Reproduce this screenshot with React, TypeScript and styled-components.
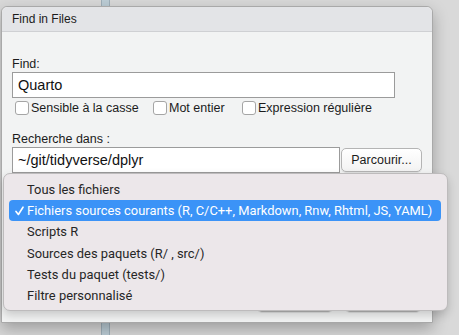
import React from "react";
import styled, { createGlobalStyle } from "styled-components";

const Global = createGlobalStyle`
  html, body { margin: 0; padding: 0; }
  body { background: #d8d8d8; width: 459px; height: 335px; overflow: hidden; }
  * { box-sizing: border-box; }
`;

const Desktop = styled.div`
  position: relative;
  width: 459px;
  height: 335px;
  display: grid;
  grid-template-columns: 101px 9px 1fr;
  background: #d9d9d9;
`;

const Pane = styled.div<{ $tone: string }>`
  background: ${(p) => p.$tone};
`;

const Splitter = styled.div`
  background: #bccdd6;
  border-left: 1px solid #9fb0ba;
  border-right: 1px solid #9fb0ba;
`;

const Dialog = styled.div`
  position: absolute;
  left: 1px;
  top: 6px;
  width: 432px;
  height: 317px;
  display: flex;
  flex-direction: column;
  background: #f2f3f3;
  border: 1px solid #a9a9a9;
  border-radius: 6px 6px 0 0;
  box-shadow: 0 6px 16px rgba(0, 0, 0, 0.28);
  font-family: "Liberation Sans", Arial, sans-serif;
  color: #1b1b1b;
`;

const TitleBar = styled.div`
  height: 25px;
  flex: none;
  display: flex;
  align-items: center;
  padding-left: 10px;
  background: #e3e4e7;
  border-bottom: 1px solid #cfd0d3;
  border-radius: 6px 6px 0 0;
  font-size: 12px;
`;

const Body = styled.div`
  flex: 1;
  display: flex;
  flex-direction: column;
  padding: 24px 0 0 10px;
`;

const Label = styled.div`
  font-size: 12.5px;
  line-height: 16px;
  height: 16px;
`;

const FieldRow = styled.div`
  display: flex;
  align-items: center;
  gap: 1px;
`;

const TextInput = styled.div<{ $w: number }>`
  width: ${(p) => p.$w}px;
  height: 26px;
  background: #ffffff;
  border: 1px solid #9b9b9b;
  display: flex;
  align-items: center;
  padding-left: 5px;
  font-size: 14.5px;
  color: #111;
`;

const Checks = styled.div`
  display: flex;
  align-items: center;
  height: 20px;
  padding-left: 3px;
`;

const Check = styled.label<{ $w: number }>`
  display: flex;
  align-items: center;
  gap: 2px;
  width: ${(p) => p.$w}px;
  font-size: 12.5px;
`;

const Box = styled.span`
  width: 14px;
  height: 14px;
  border: 1px solid #a5a5a5;
  border-radius: 3px;
  background: #fff;
`;

const Spacer = styled.div<{ $h: number }>`
  height: ${(p) => p.$h}px;
`;

const Button = styled.div<{ $w: number }>`
  width: ${(p) => p.$w}px;
  height: 24px;
  border: 1px solid #b4b4b4;
  border-radius: 5px;
  background: linear-gradient(#ffffff, #f3f3f3);
  box-shadow: 0 1px 0 rgba(0, 0, 0, 0.08);
  display: flex;
  align-items: center;
  justify-content: center;
  font-size: 12.5px;
`;

const Footer = styled.div`
  display: flex;
  justify-content: flex-end;
  gap: 12px;
  padding: 0 11px 10px 0;
  margin-top: auto;
`;

const Menu = styled.div`
  position: absolute;
  left: 3px;
  top: 173px;
  width: 445px;
  height: 138px;
  background: #ece7ea;
  border: 1px solid #bdbbbc;
  border-radius: 7px;
  box-shadow: 0 4px 10px rgba(0, 0, 0, 0.18);
  padding: 5px 6px 0 5px;
  display: flex;
  flex-direction: column;
  font-family: Roboto, "Liberation Sans", Arial, sans-serif;
`;

const Item = styled.div<{ $active?: boolean }>`
  height: 21.2px;
  display: flex;
  align-items: center;
  padding-left: 18px;
  font-size: 12.9px;
  white-space: nowrap;
  border-radius: 4px;
  color: ${(p) => (p.$active ? "#ffffff" : "#262626")};
  background: ${(p) => (p.$active ? "#3b93f7" : "transparent")};
  position: relative;
`;

const Tick = styled.svg`
  position: absolute;
  left: 6px;
  top: 6px;
`;

const items = [
  "Tous les fichiers",
  "Fichiers sources courants (R, C/C++, Markdown, Rnw, Rhtml, JS, YAML)",
  "Scripts R",
  "Sources des paquets (R/ , src/)",
  "Tests du paquet (tests/)",
  "Filtre personnalisé",
];

export default function App() {
  return (
    <>
      <Global />
      <Desktop>
        <Pane $tone="#d9d9d9" />
        <Splitter />
        <Pane $tone="#d9d9d9" />
        <Dialog>
          <TitleBar>Find in Files</TitleBar>
          <Body>
            <Label>Find:</Label>
            <FieldRow>
              <TextInput $w={383}>Quarto</TextInput>
            </FieldRow>
            <Checks>
              <Check $w={138}>
                <Box />
                Sensible à la casse
              </Check>
              <Check $w={89}>
                <Box />
                Mot entier
              </Check>
              <Check $w={150}>
                <Box />
                Expression régulière
              </Check>
            </Checks>
            <Spacer $h={13} />
            <Label>Recherche dans :</Label>
            <FieldRow>
              <TextInput $w={328}>~/git/tidyverse/dplyr</TextInput>
              <Button $w={81}>Parcourir...</Button>
            </FieldRow>
          </Body>
          <Footer>
            <Button $w={76}>Annuler</Button>
            <Button $w={76}>OK</Button>
          </Footer>
        </Dialog>
        <Menu>
          {items.map((t, i) => (
            <Item key={t} $active={i === 1}>
              {i === 1 && (
                <Tick width="9" height="10" viewBox="0 0 9 10">
                  <path d="M1 5.4 L3.4 8.5 L8 1.2" fill="none" stroke="#fff" strokeWidth="1.6" strokeLinecap="round" strokeLinejoin="round" />
                </Tick>
              )}
              {t}
            </Item>
          ))}
        </Menu>
      </Desktop>
    </>
  );
}
